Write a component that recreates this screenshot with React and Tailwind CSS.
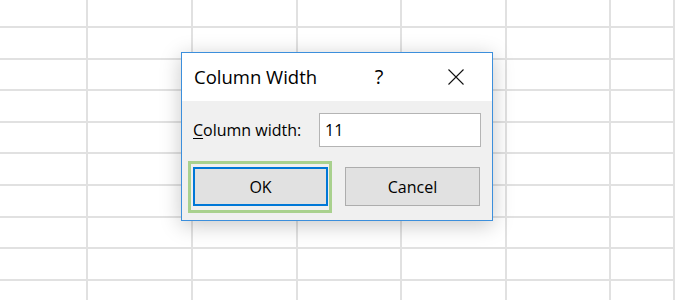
import React from 'react';

const COLS = 7;
const ROWS = 10;

const SheetGrid = () => {
  const cells = [];
  for (let r = 0; r < ROWS; r++) {
    for (let c = 0; c < COLS; c++) {
      cells.push(
        <div
          key={`${r}-${c}`}
          className="border-r-2 border-b-2 border-[#e1e1e1]"
        />
      );
    }
  }
  return (
    <div className="grid h-full grid-cols-[88px_105px_105px_104px_105px_104px_1fr] grid-rows-[28px_repeat(9,31.6px)]">
      {cells}
    </div>
  );
};

const App = () => {
  return (
    <div
      className="relative h-[300px] w-[675px] overflow-hidden bg-white text-black"
      style={{ fontFamily: '"Open Sans", "Noto Sans", sans-serif' }}
    >
      <SheetGrid />

      {/* Column Width dialog */}
      <div className="absolute left-[181px] top-[52px] flex h-[169px] w-[312px] flex-col border border-[#3c8fdc] bg-[#f0f0f0] shadow-[0_4px_20px_rgba(0,0,0,0.22)]">
        <div className="flex h-[48px] items-center bg-white pl-[12px] pr-[13px]">
          <span className="text-[18.5px] leading-none">Column Width</span>
          <span className="ml-auto flex w-[46px] justify-center text-[20px] leading-none">?</span>
          <span className="ml-[31px] flex w-[46px] justify-center">
            <svg width="16" height="16" viewBox="0 0 16 16">
              <path d="M0.5 0.5 L15.5 15.5 M15.5 0.5 L0.5 15.5" stroke="#111" strokeWidth="1.1" />
            </svg>
          </span>
        </div>

        <div className="flex flex-1 flex-col px-[11px] pt-[12px]">
          <div className="flex items-center">
            <label className="text-[16px] leading-none">
              <span className="underline underline-offset-2">C</span>olumn width:
            </label>
            <div className="ml-auto flex h-[34px] w-[162px] items-center border border-[#b4b4b4] bg-white pl-[5px] text-[16px]">
              11
            </div>
          </div>

          <div className="mt-[20px] flex items-center justify-between">
            <div className="relative">
              <span className="pointer-events-none absolute -left-[5px] -right-[4px] -top-[6px] -bottom-[7px] border-[3px] border-[#a9d18e]" />
              <button className="flex h-[39px] w-[135px] items-center justify-center border-2 border-[#0078d7] bg-[#e1e1e1] text-[16px]">
                OK
              </button>
            </div>
            <button className="mr-px flex h-[39px] w-[135px] items-center justify-center border border-[#adadad] bg-[#e1e1e1] text-[16px]">
              Cancel
            </button>
          </div>
        </div>
      </div>
    </div>
  );
};

export default App;
